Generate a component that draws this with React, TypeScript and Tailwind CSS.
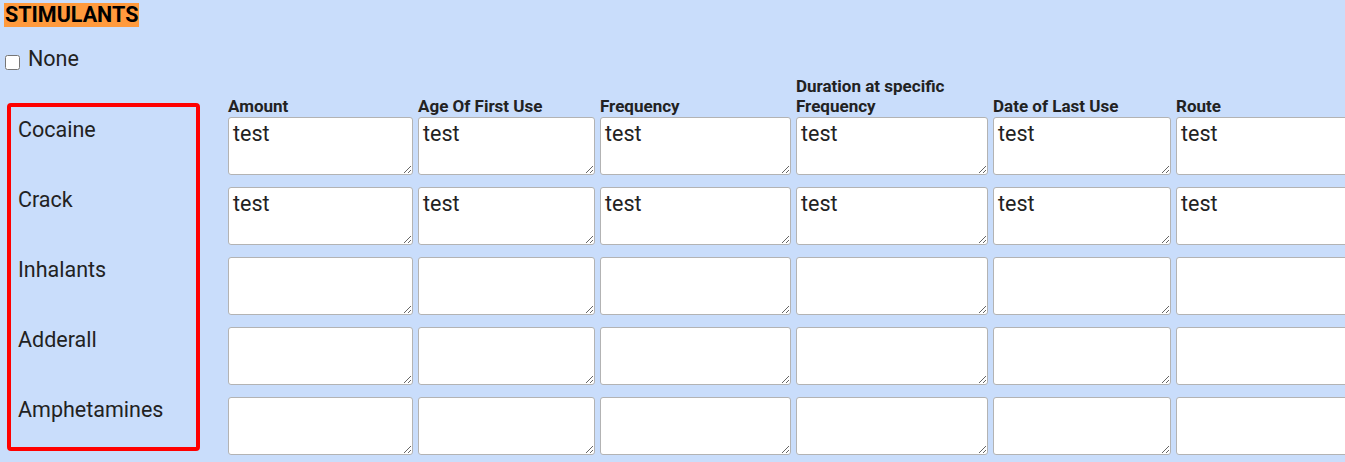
import React, { useState } from "react";

const substances = ["Cocaine", "Crack", "Inhalants", "Adderall", "Amphetamines"];

const columns = [
  { key: "amount", label: "Amount", width: "w-[185px]" },
  { key: "age", label: "Age Of First Use", width: "w-[177px]" },
  { key: "frequency", label: "Frequency", width: "w-[191px]" },
  { key: "duration", label: "Duration at specific Frequency", width: "w-[192px]" },
  { key: "lastUse", label: "Date of Last Use", width: "w-[178px]" },
  { key: "route", label: "Route", width: "w-[185px]" },
];

const initial: Record<string, string> = {};
["Cocaine", "Crack"].forEach((s) => {
  columns.forEach((c) => {
    initial[`${s}-${c.key}`] = "test";
  });
});

const App = () => {
  const [none, setNone] = useState(false);
  const [values, setValues] = useState<Record<string, string>>(initial);

  return (
    <div
      className="h-screen w-full overflow-hidden bg-[#c9ddfb] text-[#222]"
      style={{ fontFamily: "Roboto, 'Liberation Sans', sans-serif" }}
    >
      <div className="pt-[3px] pl-[4px]">
        <span className="inline-block bg-[#ff9a3d] px-px text-[21.5px] leading-[24px] font-bold text-black">
          STIMULANTS
        </span>
      </div>

      <label className="mt-[18px] flex h-[24px] items-center pl-[5px] text-[21.5px] leading-[24px]">
        <input
          type="checkbox"
          checked={none}
          onChange={(e) => setNone(e.target.checked)}
          className="m-0 mt-[6px] h-[15px] w-[15px] shrink-0"
        />
        <span className="ml-[8px]">None</span>
      </label>

      <div className="mt-[5px] flex items-start">
        <div className="mt-[27px] ml-[7px] h-[348px] w-[193px] shrink-0 rounded-[4px] border-4 border-[#ff0000] pt-[11px] pl-[7px]">
          {substances.map((s) => (
            <div key={s} className="h-[70px] text-[21.5px] leading-[24px] text-[#222]">
              {s}
            </div>
          ))}
        </div>

        <div className="ml-[28px] flex shrink-0 gap-[5px]">
          {columns.map((c) => (
            <div key={c.key} className={`${c.width} flex shrink-0 flex-col`}>
              <div className="flex h-[41px] items-end pb-[1px] text-[17px] leading-[20px] font-bold text-[#222]">
                {c.label}
              </div>
              <div className="flex flex-col gap-[12px]">
                {substances.map((s) => (
                  <textarea
                    key={s}
                    value={values[`${s}-${c.key}`] ?? ""}
                    onChange={(e) =>
                      setValues((prev) => ({ ...prev, [`${s}-${c.key}`]: e.target.value }))
                    }
                    className="block h-[58px] w-full rounded-[3px] border border-[#b3b3b3] bg-white px-[4px] pt-[4px] text-[21.5px] leading-[24px] text-[#222]"
                  />
                ))}
              </div>
            </div>
          ))}
        </div>
      </div>
    </div>
  );
};

export default App;
